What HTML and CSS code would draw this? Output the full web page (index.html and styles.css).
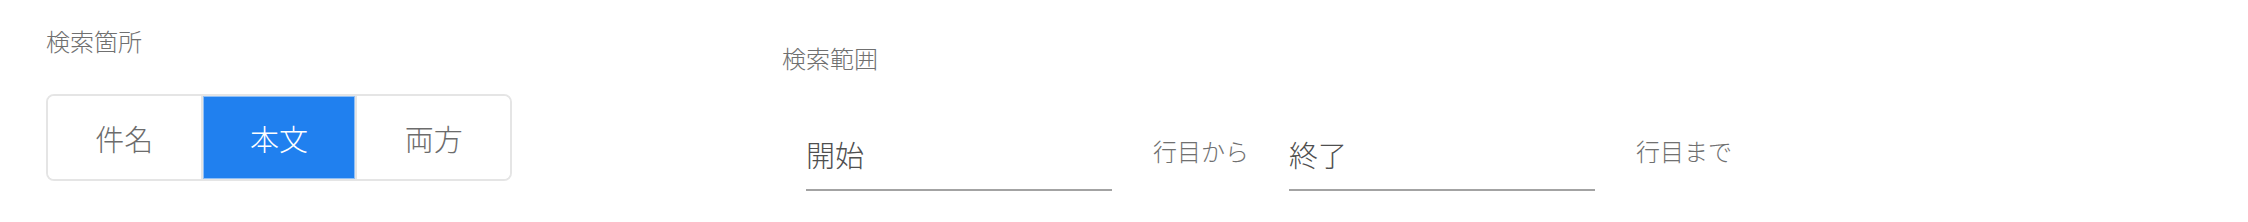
FILE: index.html
```html
<!DOCTYPE html>
<html lang="ja">
<head>
  <meta charset="UTF-8">
  <meta name="viewport" content="width=device-width, initial-scale=1.0">
  <link rel="stylesheet" href="styles.css">
</head>
<body>
<div class="search-options">
  <div class="target">
    <div class="label">検索箇所</div>
    <div class="toggle">
      <button class="toggle-btn">件名</button>
      <button class="toggle-btn active">本文</button>
      <button class="toggle-btn">両方</button>
    </div>
  </div>
  <div class="range">
    <div class="label">検索範囲</div>
    <div class="range-row">
      <input type="text" class="line-input" placeholder="開始">
      <span class="suffix">行目から</span>
      <input type="text" class="line-input" placeholder="終了">
      <span class="suffix">行目まで</span>
    </div>
  </div>
</div>
</body>
</html>
```

FILE: styles.css
```css
body {
  margin: 0;
  background-color: #ffffff;
  font-family: "Noto Sans CJK JP", "Noto Sans", sans-serif;
  font-weight: 300;
}

.search-options {
  display: flex;
  align-items: flex-start;
  padding-left: 46px;
}

.label {
  font-size: 24px;
  line-height: 24px;
  color: #707070;
}

.target {
  padding-top: 29px;
}

.toggle {
  display: flex;
  width: 466px;
  height: 87px;
  box-sizing: border-box;
  margin-top: 41px;
  border: 2px solid #e5e5e5;
  border-radius: 8px;
  overflow: hidden;
}

.toggle-btn {
  flex: 1;
  border: none;
  border-left: 2px solid #e5e5e5;
  background-color: #ffffff;
  color: #6c6c6c;
  font-family: inherit;
  font-weight: 300;
  font-size: 29px;
  padding: 0;
  cursor: pointer;
  outline: none;
}

.toggle-btn:first-child {
  border-left: none;
}

.toggle-btn.active {
  background-color: #2080ef;
  color: #ffffff;
  box-shadow: inset 0 0 0 1px #8fbff6;
}

.range {
  margin-left: 270px;
  padding-top: 46px;
}

.range-row {
  display: flex;
  align-items: flex-start;
  margin-top: 48px;
  padding-left: 24px;
}

.line-input {
  width: 306px;
  height: 71px;
  box-sizing: content-box;
  padding: 0;
  border: none;
  border-bottom: 2px solid #a3a3a3;
  font-family: inherit;
  font-weight: 300;
  font-size: 29px;
  color: #555555;
  outline: none;
  background: transparent;
}

.line-input::placeholder {
  color: #4f4f4f;
}

.suffix {
  margin: 21px 40px 0 41px;
  font-size: 24px;
  line-height: 24px;
  color: #707070;
}
```
